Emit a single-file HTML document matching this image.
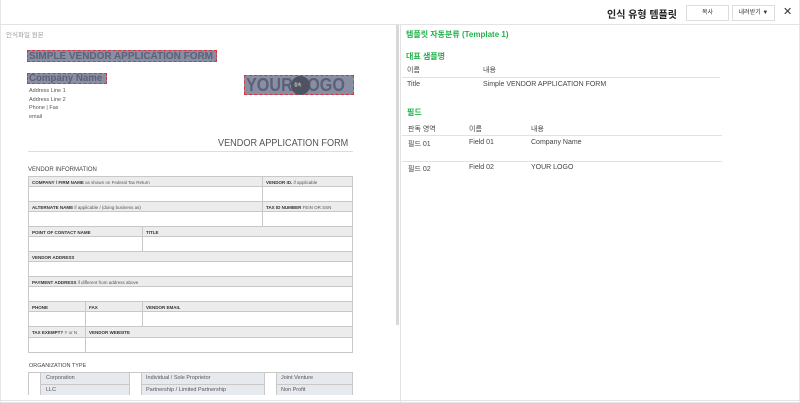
<!DOCTYPE html>
<html><head><meta charset="utf-8"><style>
*{margin:0;padding:0;box-sizing:border-box}
body{width:800px;height:403px;background:#fff;position:relative;overflow:hidden;font-family:"Liberation Sans","Noto Sans CJK KR",sans-serif;color:#333}
.a{position:absolute;white-space:nowrap}
.g{color:#22b24c;font-weight:bold;font-size:8px}
.t{font-size:7px;color:#444}
.h{background:#ececec;border:1px solid #c8c8c8}
.d{background:#fff;border:1px solid #c8c8c8}
.f{font-size:4.5px;color:#333;font-weight:bold;padding:3px 0 0 3px}
.f span{font-weight:normal;color:#555}
.box{border:1px dashed #e0303a;background:#8a8ea2;color:#5d6178;font-weight:bold;overflow:hidden}
.box span{display:inline-block;transform-origin:0 0}
</style></head><body>
<div class="a" style="left:0;top:0;width:800px;height:403px;border:1px solid #e6e6e6;border-top:none"></div>
<div class="a" style="left:0;top:24px;width:800px;height:1px;background:#e3e3e3"></div>
<div class="a" style="left:400px;top:24px;width:1px;height:379px;background:#e3e3e3"></div>
<div class="a" style="left:0;top:400px;width:800px;height:1px;background:#e3e3e3"></div>
<div class="a" style="left:607px;top:6px;font-size:10px;font-weight:bold;color:#222">인식 유형 템플릿</div>
<div class="a" style="left:686px;top:5px;width:43px;height:16px;border:1px solid #ddd;font-size:6px;text-align:center;line-height:14px">복사</div>
<div class="a" style="left:732px;top:5px;width:43px;height:16px;border:1px solid #ddd;font-size:6px;text-align:center;line-height:14px">내려받기 ▼</div>
<div class="a" style="left:783px;top:5px;font-size:11px;color:#333">✕</div>

<div class="a" style="left:6px;top:29px;font-size:6.5px;color:#999">인식파일 원본</div>
<div class="a" style="left:396px;top:25px;width:3px;height:300px;background:#d8d8d8"></div>

<div class="a box" style="left:27px;top:50px;width:190px;height:12px;font-size:10.5px;line-height:10px;padding-left:1px"><span style="transform:scaleX(0.95)">SIMPLE VENDOR APPLICATION FORM</span></div>
<div class="a box" style="left:27px;top:73px;width:80px;height:11px;font-size:10px;line-height:9px;padding-left:1px"><span style="transform:scaleX(0.97)">Company Name</span></div>
<div class="a box" style="left:244px;top:75px;width:110px;height:20px;font-size:18px;line-height:18px;padding-left:1px"><span style="transform:scaleX(0.9)">YOUR LOGO</span></div>
<div class="a" style="left:291px;top:76px;width:19px;height:19px;border-radius:50%;background:#4f5260"></div>
<div class="a" style="left:294px;top:82px;font-size:4px;color:#fff">접속</div>
<div class="a" style="left:29px;top:87px;font-size:5.5px;line-height:8.5px;color:#555;white-space:normal">Address Line 1<br>Address Line 2<br>Phone | Fax<br>email</div>
<div class="a" style="left:218px;top:137px;font-size:10.5px;color:#555;transform:scaleX(0.87);transform-origin:0 0">VENDOR APPLICATION FORM</div>
<div class="a" style="left:28px;top:151px;width:325px;height:1px;background:#ddd"></div>
<div class="a" style="left:28px;top:167px;font-size:6px;color:#444">VENDOR INFORMATION</div>

<div class="a h f" style="left:28px;top:176px;width:235px;height:11px">COMPANY / FIRM NAME <span>as shown on Federal Tax Return</span></div>
<div class="a h f" style="left:262px;top:176px;width:91px;height:11px">VENDOR ID. <span>if applicable</span></div>
<div class="a d" style="left:28px;top:186px;width:235px;height:16px"></div>
<div class="a d" style="left:262px;top:186px;width:91px;height:16px"></div>
<div class="a h f" style="left:28px;top:201px;width:235px;height:11px">ALTERNATE NAME <span>if applicable / (doing business as)</span></div>
<div class="a h f" style="left:262px;top:201px;width:91px;height:11px">TAX ID NUMBER <span>FEIN OR SSN</span></div>
<div class="a d" style="left:28px;top:211px;width:235px;height:16px"></div>
<div class="a d" style="left:262px;top:211px;width:91px;height:16px"></div>
<div class="a h f" style="left:28px;top:226px;width:115px;height:11px">POINT OF CONTACT NAME</div>
<div class="a h f" style="left:142px;top:226px;width:211px;height:11px">TITLE</div>
<div class="a d" style="left:28px;top:236px;width:115px;height:16px"></div>
<div class="a d" style="left:142px;top:236px;width:211px;height:16px"></div>
<div class="a h f" style="left:28px;top:251px;width:325px;height:11px">VENDOR ADDRESS</div>
<div class="a d" style="left:28px;top:261px;width:325px;height:16px"></div>
<div class="a h f" style="left:28px;top:276px;width:325px;height:11px">PAYMENT ADDRESS <span>if different from address above</span></div>
<div class="a d" style="left:28px;top:286px;width:325px;height:16px"></div>
<div class="a h f" style="left:28px;top:301px;width:58px;height:11px">PHONE</div>
<div class="a h f" style="left:85px;top:301px;width:58px;height:11px">FAX</div>
<div class="a h f" style="left:142px;top:301px;width:211px;height:11px">VENDOR EMAIL</div>
<div class="a d" style="left:28px;top:311px;width:58px;height:16px"></div>
<div class="a d" style="left:85px;top:311px;width:58px;height:16px"></div>
<div class="a d" style="left:142px;top:311px;width:211px;height:16px"></div>
<div class="a h f" style="left:28px;top:326px;width:58px;height:12px">TAX EXEMPT? <span>Y or N</span></div>
<div class="a h f" style="left:85px;top:326px;width:268px;height:12px">VENDOR WEBSITE</div>
<div class="a d" style="left:28px;top:337px;width:58px;height:16px"></div>
<div class="a d" style="left:85px;top:337px;width:268px;height:16px"></div>

<div class="a" style="left:29px;top:363px;font-size:5.5px;color:#444">ORGANIZATION TYPE</div>
<div class="a" style="left:28px;top:372px;width:325px;height:25px;background:#e6e9ee;border:1px solid #c8c8c8"></div>
<div class="a" style="left:28px;top:384px;width:325px;height:1px;background:#c8c8c8"></div>
<div class="a" style="left:28px;top:372px;width:13px;height:25px;background:#fff;border:1px solid #c8c8c8"></div>
<div class="a" style="left:129px;top:372px;width:13px;height:25px;background:#fff;border:1px solid #c8c8c8"></div>
<div class="a" style="left:264px;top:372px;width:13px;height:25px;background:#fff;border:1px solid #c8c8c8"></div>
<div class="a" style="left:46px;top:375px;font-size:5.5px;color:#555">Corporation</div>
<div class="a" style="left:146px;top:375px;font-size:5.5px;color:#555">Individual / Sole Proprietor</div>
<div class="a" style="left:281px;top:375px;font-size:5.5px;color:#555">Joint Venture</div>
<div class="a" style="left:46px;top:387px;font-size:5.5px;color:#555">LLC</div>
<div class="a" style="left:146px;top:387px;font-size:5.5px;color:#555">Partnership / Limited Partnership</div>
<div class="a" style="left:281px;top:387px;font-size:5.5px;color:#555">Non Profit</div>
<div class="a" style="left:2px;top:395px;width:396px;height:5px;background:#fff"></div>

<div class="a g" style="left:406px;top:29px">템플릿 자동분류 (Template 1)</div>
<div class="a g" style="left:406px;top:51px">대표 샘플명</div>
<div class="a t" style="left:407px;top:65px">이름</div>
<div class="a t" style="left:483px;top:65px">내용</div>
<div class="a" style="left:402px;top:77px;width:318px;height:1px;background:#dbe3ef"></div>
<div class="a t" style="left:407px;top:81px">Title</div>
<div class="a t" style="left:483px;top:81px">Simple VENDOR APPLICATION FORM</div>
<div class="a g" style="left:407px;top:107px">필드</div>
<div class="a t" style="left:408px;top:124px">판독 영역</div>
<div class="a t" style="left:469px;top:124px">이름</div>
<div class="a t" style="left:531px;top:124px">내용</div>
<div class="a" style="left:402px;top:135px;width:320px;height:1px;background:#dbe3ef"></div>
<div class="a t" style="left:408px;top:139px">필드 01</div>
<div class="a t" style="left:469px;top:139px">Field 01</div>
<div class="a t" style="left:531px;top:139px">Company Name</div>
<div class="a" style="left:402px;top:161px;width:320px;height:1px;background:#dbe3ef"></div>
<div class="a t" style="left:408px;top:164px">필드 02</div>
<div class="a t" style="left:469px;top:164px">Field 02</div>
<div class="a t" style="left:531px;top:164px">YOUR LOGO</div>
</body></html>
